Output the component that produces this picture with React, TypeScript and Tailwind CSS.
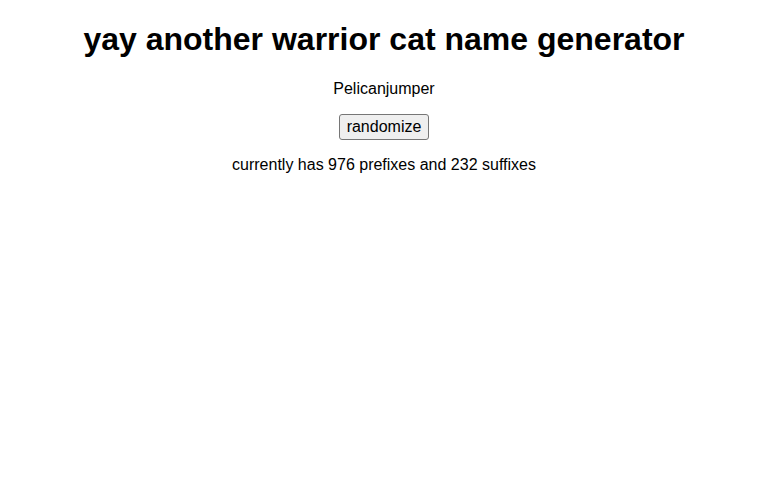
import { useState } from 'react';

const prefixes = ['Pelican', 'Frost', 'Ember', 'Moss', 'Bramble', 'Thistle'];
const suffixes = ['jumper', 'pelt', 'claw', 'whisker', 'heart', 'tail'];

const App = () => {
  const [name, setName] = useState('Pelicanjumper');

  // Pick a random prefix + suffix pair
  const randomize = () => {
    const p = prefixes[Math.floor(Math.random() * prefixes.length)];
    const s = suffixes[Math.floor(Math.random() * suffixes.length)];
    setName(p + s);
  };

  return (
    <div className="min-h-screen bg-white text-center text-black font-['Liberation_Sans',Arial,sans-serif] pt-px">
      <h1 className="text-[32px] font-bold leading-[normal] mt-[20.44px] mb-[21.44px]">
        yay another warrior cat name generator
      </h1>
      <p className="text-base leading-[normal] my-4">{name}</p>
      <p className="text-base leading-[normal] my-4">
        <button
          onClick={randomize}
          className="text-base leading-[normal] bg-[#efefef] border border-[#767676] rounded-[3px] px-[7px] py-[3px] text-black"
        >
          randomize
        </button>
      </p>
      <p className="text-base leading-[normal] my-4">currently has 976 prefixes and 232 suffixes</p>
    </div>
  );
};

export default App;
